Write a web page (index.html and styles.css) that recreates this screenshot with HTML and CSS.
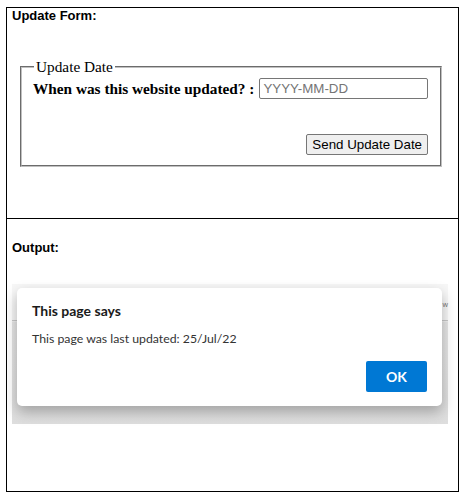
FILE: index.html
```html
<html>
    <head>
        <link rel="stylesheet" href="styles.css">
    </head>
    <body>
        <div class="sheet">
            <div class="cell cell-form">
                <div class="heading">Update Form:</div>
                <fieldset class="box">
                    <legend class="box-title">Update Date</legend>
                    <div class="row">
                        <label class="question" for="updated">When was this website updated? :</label>
                        <input class="date" id="updated" type="text" placeholder="YYYY-MM-DD">
                    </div>
                    <div class="row row-end">
                        <button class="button" type="button">Send Update Date</button>
                    </div>
                </fieldset>
            </div>
            <div class="cell cell-output">
                <div class="heading">Output:</div>
                <div class="shot">
                    <div class="shot-line"></div>
                    <div class="shot-glyph">w</div>
                    <div class="dialog">
                        <div class="dialog-title">This page says</div>
                        <div class="dialog-text">This page was last updated: 25/Jul/22</div>
                        <div class="dialog-actions">
                            <button class="ok" type="button">OK</button>
                        </div>
                    </div>
                </div>
            </div>
        </div>
    </body>
</html>
```

FILE: styles.css
```css
body {
    margin: 0;
    background: #fff;
}

.sheet {
    margin: 7px 0 0 6px;
    width: 453px;
    border: 1px solid #000;
    box-sizing: border-box;
}

.cell {
    box-sizing: border-box;
    padding: 0 5px;
}

.cell-form {
    height: 211px;
    padding-top: 1px;
    border-bottom: 1px solid #000;
}

.cell-output {
    height: 272px;
    padding-top: 22px;
}

.heading {
    font-family: "Liberation Sans", Arial, sans-serif;
    font-size: 13px;
    font-weight: bold;
    line-height: 14px;
    color: #000;
}

.box {
    min-width: 0;
    margin: 35px 11px 0 8px;
    padding: 2px 12px 10px 11px;
    border: 2px groove #c0c0c0;
    font-family: "Liberation Serif", "Times New Roman", serif;
    font-size: 15.3px;
}

.box-title {
    margin-left: 1px;
    padding: 0 2px;
    line-height: 18px;
}

.row {
    display: flex;
    align-items: center;
    gap: 5px;
}

.row-end {
    justify-content: flex-end;
    margin-top: 35px;
}

.question {
    font-weight: bold;
    white-space: nowrap;
}

.date {
    flex: 1;
    width: 0;
    min-width: 0;
    height: 21px;
    box-sizing: border-box;
    margin: 0;
    padding: 1px 3px;
    border: 1px solid #767676;
    border-radius: 2px;
    font-family: "Liberation Sans", Arial, sans-serif;
    font-size: 13.33px;
}

.date::placeholder {
    color: #757575;
}

.button {
    height: 21px;
    margin: 0;
    padding: 1px 5px;
    border: 1px solid #767676;
    border-radius: 2px;
    background: #efefef;
    color: #000;
    font-family: "Liberation Sans", Arial, sans-serif;
    font-size: 13.33px;
}

.shot {
    position: relative;
    margin-top: 29px;
    width: 436px;
    box-sizing: border-box;
    padding: 4px 6px 18px 5px;
    background: linear-gradient(#f7f7f7 0, #f7f7f7 37px, #e6e6e6 38px, #dedede 100%);
}

.shot-line {
    position: absolute;
    left: 0;
    right: 0;
    top: 36px;
    height: 1px;
    background: #c8c8c8;
}

.shot-glyph {
    position: absolute;
    right: 0;
    top: 17px;
    font-family: "Noto Sans", sans-serif;
    font-size: 7px;
    line-height: 8px;
    color: #777;
}

.dialog {
    position: relative;
    height: 118px;
    box-sizing: border-box;
    padding: 13px 15px 14px 15px;
    background: #fff;
    border-radius: 5px;
    box-shadow: 0 6px 14px rgba(0, 0, 0, 0.28);
    font-family: Lato, "Noto Sans", sans-serif;
}

.dialog-title {
    font-size: 14px;
    font-weight: bold;
    line-height: 19px;
    color: #1a1a1a;
}

.dialog-text {
    margin-top: 10px;
    font-size: 12.3px;
    line-height: 17px;
    color: #333;
}

.dialog-actions {
    display: flex;
    justify-content: flex-end;
    margin-top: 14px;
}

.ok {
    width: 61px;
    height: 31px;
    margin: 0;
    border: none;
    border-radius: 2px;
    background: #0078d4;
    color: #fff;
    font-family: Lato, "Noto Sans", sans-serif;
    font-size: 14px;
    font-weight: bold;
}
```
